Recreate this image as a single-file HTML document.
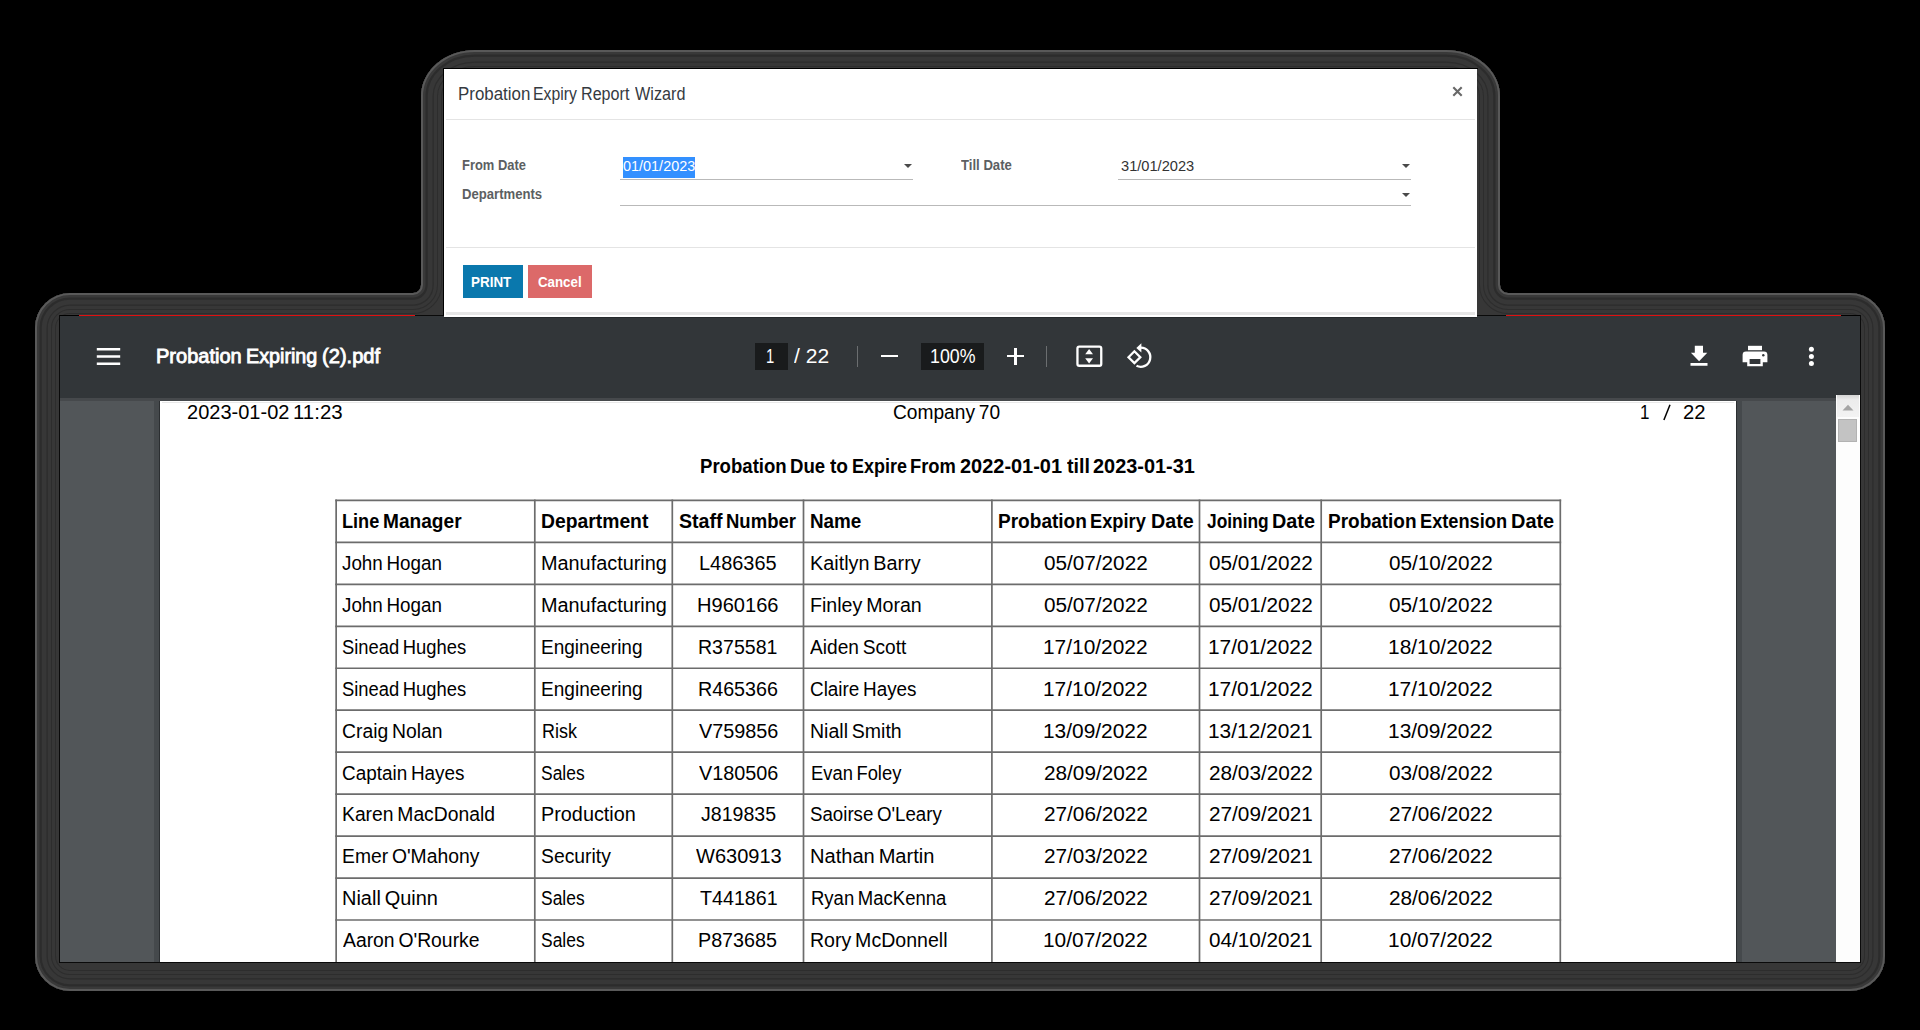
<!DOCTYPE html>
<html><head><meta charset="utf-8"><title>Probation Expiry Report</title>
<style>
*{box-sizing:border-box;margin:0;padding:0}
html,body{width:1920px;height:1030px;overflow:hidden;background:#000;font-family:"Liberation Sans",sans-serif;}
.abs{position:absolute}
.t{position:absolute;white-space:nowrap;transform-origin:0 50%;line-height:1}
/* shadow bands */
/* pdf viewer */
#viewer{left:60px;top:316px;width:1800px;height:646px;background:#525659;overflow:hidden}
#vout{left:59px;top:315px;width:1802px;height:648px;background:#0a0a0a}
#toolbar{left:0;top:0;width:1800px;height:82px;background:#323639;box-shadow:0 3px 0 0 #46494c}
#page{left:100px;top:84px;width:1576px;height:600px;background:#fff;box-shadow:0 0 0 1px #2b2e31,0 0 0 6px #45494c}
#pgline{left:102px;top:86px;width:1572px;height:1px;background:#e8e8e8}
#sb{left:1776px;top:79px;width:24px;height:567px;background:#fdfdfd;z-index:3}
#sbbtn{left:1px;top:0;width:22px;height:22px;background:linear-gradient(#d4d4d4,#ececec 5px,#f3f3f3)}
#sbthumb{left:2px;top:24px;width:19px;height:23px;background:#c3c3c3;border:1px solid #b2b2b2}
.box{background:#191b1c;position:absolute}
.sep{position:absolute;width:1px;background:#6b6e70}
.hl,.vl{position:absolute;background:#757575}
/* dialog */
#dlg{left:444px;top:69px;width:1033px;height:247.700px;background:#fff}
.line{position:absolute;height:1px}
.btn{position:absolute;top:196px;height:33px}
.caret{position:absolute;width:0;height:0;border-left:4.5px solid transparent;border-right:4.5px solid transparent;border-top:4.5px solid #4a4a4a}
</style></head><body>
<svg class="abs" style="left:0;top:0" width="1920" height="1030" viewBox="0 0 1920 1030">
<defs><clipPath id="bc"><path d="M70 293 H413 A8 8 0 0 0 421 285 V96 A54 46 0 0 1 475 50 H1446 A54 46 0 0 1 1500 96 V285 A8 8 0 0 0 1508 293 H1850 A35 35 0 0 1 1885 328 V956 A35 35 0 0 1 1850 991 H70 A35 35 0 0 1 35 956 V328 A35 35 0 0 1 70 293 Z"/></clipPath></defs>
<path d="M70 293 H413 A8 8 0 0 0 421 285 V96 A54 46 0 0 1 475 50 H1446 A54 46 0 0 1 1500 96 V285 A8 8 0 0 0 1508 293 H1850 A35 35 0 0 1 1885 328 V956 A35 35 0 0 1 1850 991 H70 A35 35 0 0 1 35 956 V328 A35 35 0 0 1 70 293 Z" fill="#373737"/>
<g clip-path="url(#bc)" fill="none" stroke-linejoin="round">
<path d="M70 293 H413 A8 8 0 0 0 421 285 V96 A54 46 0 0 1 475 50 H1446 A54 46 0 0 1 1500 96 V285 A8 8 0 0 0 1508 293 H1850 A35 35 0 0 1 1885 328 V956 A35 35 0 0 1 1850 991 H70 A35 35 0 0 1 35 956 V328 A35 35 0 0 1 70 293 Z" stroke="#2d2d2d" stroke-width="42"/>
<path d="M70 293 H413 A8 8 0 0 0 421 285 V96 A54 46 0 0 1 475 50 H1446 A54 46 0 0 1 1500 96 V285 A8 8 0 0 0 1508 293 H1850 A35 35 0 0 1 1885 328 V956 A35 35 0 0 1 1850 991 H70 A35 35 0 0 1 35 956 V328 A35 35 0 0 1 70 293 Z" stroke="#373737" stroke-width="40"/>
<path d="M70 293 H413 A8 8 0 0 0 421 285 V96 A54 46 0 0 1 475 50 H1446 A54 46 0 0 1 1500 96 V285 A8 8 0 0 0 1508 293 H1850 A35 35 0 0 1 1885 328 V956 A35 35 0 0 1 1850 991 H70 A35 35 0 0 1 35 956 V328 A35 35 0 0 1 70 293 Z" stroke="#2d2d2d" stroke-width="34"/>
<path d="M70 293 H413 A8 8 0 0 0 421 285 V96 A54 46 0 0 1 475 50 H1446 A54 46 0 0 1 1500 96 V285 A8 8 0 0 0 1508 293 H1850 A35 35 0 0 1 1885 328 V956 A35 35 0 0 1 1850 991 H70 A35 35 0 0 1 35 956 V328 A35 35 0 0 1 70 293 Z" stroke="#373737" stroke-width="32"/>
<path d="M70 293 H413 A8 8 0 0 0 421 285 V96 A54 46 0 0 1 475 50 H1446 A54 46 0 0 1 1500 96 V285 A8 8 0 0 0 1508 293 H1850 A35 35 0 0 1 1885 328 V956 A35 35 0 0 1 1850 991 H70 A35 35 0 0 1 35 956 V328 A35 35 0 0 1 70 293 Z" stroke="#2d2d2d" stroke-width="25.6"/>
<path d="M70 293 H413 A8 8 0 0 0 421 285 V96 A54 46 0 0 1 475 50 H1446 A54 46 0 0 1 1500 96 V285 A8 8 0 0 0 1508 293 H1850 A35 35 0 0 1 1885 328 V956 A35 35 0 0 1 1850 991 H70 A35 35 0 0 1 35 956 V328 A35 35 0 0 1 70 293 Z" stroke="#373737" stroke-width="23"/>
<path d="M70 293 H413 A8 8 0 0 0 421 285 V96 A54 46 0 0 1 475 50 H1446 A54 46 0 0 1 1500 96 V285 A8 8 0 0 0 1508 293 H1850 A35 35 0 0 1 1885 328 V956 A35 35 0 0 1 1850 991 H70 A35 35 0 0 1 35 956 V328 A35 35 0 0 1 70 293 Z" stroke="#2c2c2c" stroke-width="13.4"/>
<path d="M70 293 H413 A8 8 0 0 0 421 285 V96 A54 46 0 0 1 475 50 H1446 A54 46 0 0 1 1500 96 V285 A8 8 0 0 0 1508 293 H1850 A35 35 0 0 1 1885 328 V956 A35 35 0 0 1 1850 991 H70 A35 35 0 0 1 35 956 V328 A35 35 0 0 1 70 293 Z" stroke="#393939" stroke-width="9"/>
<path d="M70 293 H413 A8 8 0 0 0 421 285 V96 A54 46 0 0 1 475 50 H1446 A54 46 0 0 1 1500 96 V285 A8 8 0 0 0 1508 293 H1850 A35 35 0 0 1 1885 328 V956 A35 35 0 0 1 1850 991 H70 A35 35 0 0 1 35 956 V328 A35 35 0 0 1 70 293 Z" stroke="#595959" stroke-width="4"/>
</g></svg>

<div id="vout" class="abs"></div>
<div id="viewer" class="abs">
  <div id="page" class="abs"></div>
  <div id="pgline" class="abs"></div>
  <div id="sb" class="abs">
    <div id="sbbtn" class="abs"></div>
    <svg class="abs" style="left:5.5px;top:8.600px" width="12" height="7" viewBox="0 0 12 7"><path d="M0.5 6.5 L6 0.8 L11.5 6.5 Z" fill="#a5a5a5"/></svg>
    <div id="sbthumb" class="abs"></div>
  </div>
  <div id="toolbar" class="abs">
    <!-- hamburger -->
    <svg class="abs" style="left:36px;top:31px" width="25" height="19" viewBox="0 0 25 19"><path d="M0.8 1h23.4v2.6H0.8z M0.8 8.2h23.4v2.6H0.8z M0.8 15.4h23.4v2.6H0.8z" fill="#fff"/></svg>
    <div class="box" style="left:695px;top:27px;width:33px;height:27px"></div>
    <div class="sep" style="left:797px;top:30px;height:21px"></div>
    <div class="abs" style="left:821px;top:39px;width:17px;height:2.4px;background:#fff"></div>
    <div class="box" style="left:861px;top:27px;width:63px;height:27px"></div>
    <div class="abs" style="left:947px;top:39px;width:17px;height:2.4px;background:#fff"></div>
    <div class="abs" style="left:954.3px;top:31.7px;width:2.4px;height:17px;background:#fff"></div>
    <div class="sep" style="left:986px;top:30px;height:21px"></div>
    <!-- fit to page -->
    <svg class="abs" style="left:1015px;top:28px" width="29" height="25" viewBox="0 0 29 25"><rect x="2.45" y="2.65" width="23.800" height="19.100" rx="1.800" fill="none" stroke="#fff" stroke-width="2.300"/><path d="M14.1 4.900l3.900 5.400h-7.800z M14.100 19.500l3.900-5.200h-7.800z" fill="#fff"/></svg>
    <!-- rotate -->
    <svg class="abs" style="left:1065px;top:26px" width="29" height="28" viewBox="0 0 29 28"><path d="M15.800 5.600 A9.600 9.600 0 1 1 11.500 23.830" fill="none" stroke="#fff" stroke-width="2.300"/><path d="M16.400 1.200 L11.300 6 L16.400 10.600 Z" fill="#fff"/><path d="M3.500 15.200 L9.400 9.300 L15.300 15.200 L9.400 21.100 Z" fill="none" stroke="#323639" stroke-width="4.300"/><path d="M3.500 15.200 L9.400 9.300 L15.300 15.200 L9.400 21.100 Z" fill="none" stroke="#fff" stroke-width="2.300"/></svg>
    <!-- download -->
    <svg class="abs" style="left:1629px;top:29px" width="20" height="22" viewBox="0 0 20 22"><path d="M5.800 0.800h8.200v7h4.300L10.100 16.200 1.900 7.800H5.800z M1.500 18h17v2.700H1.500z" fill="#fff"/></svg>
    <!-- print -->
    <svg class="abs" style="left:1682px;top:29px" width="26" height="22" viewBox="0 0 26 22"><path d="M6 0.8h14v4.4H6z" fill="#fff"/><path d="M4 6.4h18a3.4 3.4 0 0 1 3.4 3.4v7.4h-4.6v4H5.2v-4H0.6V9.800a3.400 3.400 0 0 1 3.400 -3.400z M7.600 14h10.800v5H7.600z" fill="#fff" fill-rule="evenodd"/><circle cx="21.300" cy="10.200" r="1.200" fill="#323639"/></svg>
    <!-- more -->
    <svg class="abs" style="left:1747px;top:30px" width="9" height="22" viewBox="0 0 9 22"><circle cx="4.400" cy="3.300" r="2.500" fill="#fff"/><circle cx="4.400" cy="10.400" r="2.500" fill="#fff"/><circle cx="4.400" cy="17.400" r="2.500" fill="#fff"/></svg>
  </div>
</div>
<!-- red accent line above viewer -->
<div class="abs" style="left:60px;top:315px;width:19px;height:1px;background:#000"></div>
<div class="abs" style="left:1841px;top:315px;width:19px;height:1px;background:#000"></div>
<div class="abs" style="left:79px;top:314.700px;width:336px;height:1.300px;background:#e01010"></div>
<div class="abs" style="left:1506px;top:314.700px;width:335px;height:1.300px;background:#e01010"></div>

<!-- table grid (page coords) -->
<div id="grid">
<svg class="abs" style="left:0;top:0" width="1920" height="962" viewBox="0 0 1920 962"><g stroke="#6c6c6c" stroke-width="1.7" fill="none">
<path d="M335.29999999999995 500.40H1561.1499999999999"/>
<path d="M335.29999999999995 542.36H1561.1499999999999"/>
<path d="M335.29999999999995 584.32H1561.1499999999999"/>
<path d="M335.29999999999995 626.28H1561.1499999999999"/>
<path d="M335.29999999999995 668.24H1561.1499999999999"/>
<path d="M335.29999999999995 710.20H1561.1499999999999"/>
<path d="M335.29999999999995 752.16H1561.1499999999999"/>
<path d="M335.29999999999995 794.12H1561.1499999999999"/>
<path d="M335.29999999999995 836.08H1561.1499999999999"/>
<path d="M335.29999999999995 878.04H1561.1499999999999"/>
<path d="M335.29999999999995 920.00H1561.1499999999999"/>
<path d="M336.15 499.55V962"/>
<path d="M534.8 499.55V962"/>
<path d="M672.3 499.55V962"/>
<path d="M803.5 499.55V962"/>
<path d="M991.9 499.55V962"/>
<path d="M1199.5 499.55V962"/>
<path d="M1321.2 499.55V962"/>
<path d="M1560.3 499.55V962"/>
</g></svg>
<svg class="abs" style="left:1660px;top:402px" width="14" height="20" viewBox="0 0 14 20"><path d="M3.900 18 L10 2.800" stroke="#000" stroke-width="1.500" fill="none"/></svg>
</div>

<div id="dlg" class="abs">
  <div class="line" style="left:2px;top:50px;width:1029px;background:#e4e4e4"></div>
  <!-- close x -->
  <svg class="abs" style="left:1008px;top:17px" width="11" height="11" viewBox="0 0 11 11"><path d="M1.300 1.300l8.400 8.400M9.700 1.300l-8.400 8.400" stroke="#686868" stroke-width="2.100" fill="none"/></svg>
  <div class="abs" style="left:178.600px;top:88.300px;width:72.300px;height:20.400px;background:#3390ff"></div>
  <div class="line" style="left:176px;top:110px;width:293px;background:#b9b9b9"></div>
  <div class="caret" style="left:460px;top:95px"></div>
  <div class="line" style="left:674px;top:110px;width:293px;background:#b9b9b9"></div>
  <div class="caret" style="left:958px;top:95px"></div>
  <div class="line" style="left:176px;top:136px;width:791px;background:#b9b9b9"></div>
  <div class="caret" style="left:958px;top:124px"></div>
  <div class="line" style="left:2px;top:178px;width:1029px;background:#e4e4e4"></div>
  <div class="btn" style="left:18.500px;width:60px;background:#0a78ad"></div>
  <div class="btn" style="left:84px;width:64px;background:#dc6969"></div>
  <div class="abs" style="left:2px;top:243px;width:1029px;height:3px;background:#e6e6e6"></div>
</div>
<div class="abs" style="left:444px;top:317px;width:1033px;height:1px;background:#24282b"></div>
<div class="abs" style="left:443px;top:68px;width:1035px;height:1px;background:#000"></div>
<div class="abs" style="left:443px;top:68px;width:1px;height:248px;background:#000"></div>

<span class="t" style="left:187.49px;top:403.00px;font-size:19.5px;color:#000;transform:scaleX(1.0267);">2023-01-02</span>
<span class="t" style="left:293.16px;top:403.00px;font-size:19.5px;color:#000;transform:scaleX(1.0488);">11:23</span>
<span class="t" style="left:893.08px;top:403.00px;font-size:19.5px;color:#000;transform:scaleX(0.9824);word-spacing:-1.6px;">Company 70</span>
<span class="t" style="left:1639.55px;top:403.00px;font-size:19.5px;color:#000;transform:scaleX(0.8727);">1</span>
<span class="t" style="left:1683.49px;top:403.00px;font-size:19.5px;color:#000;transform:scaleX(1.0392);">22</span>
<span class="t" style="left:700.04px;top:457.00px;font-size:19.5px;font-weight:700;color:#000;transform:scaleX(0.9529);">Probation</span>
<span class="t" style="left:790.36px;top:457.00px;font-size:19.5px;font-weight:700;color:#000;transform:scaleX(0.9542);">Due</span>
<span class="t" style="left:829.66px;top:457.00px;font-size:19.5px;font-weight:700;color:#000;transform:scaleX(0.9799);">to</span>
<span class="t" style="left:851.51px;top:457.00px;font-size:19.5px;font-weight:700;color:#000;transform:scaleX(0.9203);">Expire</span>
<span class="t" style="left:910.45px;top:457.00px;font-size:19.5px;font-weight:700;color:#000;transform:scaleX(0.9410);">From</span>
<span class="t" style="left:959.96px;top:457.00px;font-size:19.5px;font-weight:700;color:#000;transform:scaleX(1.0231);">2022-01-01</span>
<span class="t" style="left:1066.96px;top:457.00px;font-size:19.5px;font-weight:700;color:#000;transform:scaleX(1.0112);">till</span>
<span class="t" style="left:1093.23px;top:457.00px;font-size:19.5px;font-weight:700;color:#000;transform:scaleX(1.0213);">2023-01-31</span>
<span class="t" style="left:341.72px;top:512.00px;font-size:19.5px;font-weight:700;color:#000;transform:scaleX(0.9294);">Line</span>
<span class="t" style="left:382.87px;top:512.00px;font-size:19.5px;font-weight:700;color:#000;transform:scaleX(0.9799);">Manager</span>
<span class="t" style="left:540.68px;top:512.00px;font-size:19.5px;font-weight:700;color:#000;transform:scaleX(0.9908);">Department</span>
<span class="t" style="left:678.69px;top:512.00px;font-size:19.5px;font-weight:700;color:#000;transform:scaleX(1.0044);">Staff</span>
<span class="t" style="left:726.40px;top:512.00px;font-size:19.5px;font-weight:700;color:#000;transform:scaleX(0.9493);">Number</span>
<span class="t" style="left:810.07px;top:512.00px;font-size:19.5px;font-weight:700;color:#000;transform:scaleX(0.9670);">Name</span>
<span class="t" style="left:997.72px;top:512.00px;font-size:19.5px;font-weight:700;color:#000;transform:scaleX(0.9766);">Probation</span>
<span class="t" style="left:1090.16px;top:512.00px;font-size:19.5px;font-weight:700;color:#000;transform:scaleX(0.9359);">Expiry</span>
<span class="t" style="left:1150.77px;top:512.00px;font-size:19.5px;font-weight:700;color:#000;transform:scaleX(1.0107);">Date</span>
<span class="t" style="left:1206.50px;top:512.00px;font-size:19.5px;font-weight:700;color:#000;transform:scaleX(0.8894);">Joining</span>
<span class="t" style="left:1272.29px;top:512.00px;font-size:19.5px;font-weight:700;color:#000;transform:scaleX(1.0161);">Date</span>
<span class="t" style="left:1327.93px;top:512.00px;font-size:19.5px;font-weight:700;color:#000;transform:scaleX(0.9732);">Probation</span>
<span class="t" style="left:1420.11px;top:512.00px;font-size:19.5px;font-weight:700;color:#000;transform:scaleX(0.9339);">Extension</span>
<span class="t" style="left:1511.45px;top:512.00px;font-size:19.5px;font-weight:700;color:#000;transform:scaleX(1.0214);">Date</span>
<span class="t" style="left:342.43px;top:554.00px;font-size:19.5px;color:#000;transform:scaleX(0.9647);word-spacing:-1.6px;">John Hogan</span>
<span class="t" style="left:541.02px;top:554.00px;font-size:19.5px;color:#000;transform:scaleX(1.0181);">Manufacturing</span>
<span class="t" style="left:699.05px;top:554.00px;font-size:19.5px;color:#000;transform:scaleX(1.0224);">L486365</span>
<span class="t" style="left:810.41px;top:554.00px;font-size:19.5px;color:#000;transform:scaleX(1.0161);word-spacing:-1.6px;">Kaitlyn Barry</span>
<span class="t" style="left:1043.81px;top:554.00px;font-size:19.5px;color:#000;transform:scaleX(1.0623);">05/07/2022</span>
<span class="t" style="left:1208.81px;top:554.00px;font-size:19.5px;color:#000;transform:scaleX(1.0623);">05/01/2022</span>
<span class="t" style="left:1389.29px;top:554.00px;font-size:19.5px;color:#000;transform:scaleX(1.0623);">05/10/2022</span>
<span class="t" style="left:342.37px;top:596.00px;font-size:19.5px;color:#000;transform:scaleX(0.9645);word-spacing:-1.6px;">John Hogan</span>
<span class="t" style="left:541.02px;top:596.00px;font-size:19.5px;color:#000;transform:scaleX(1.0181);">Manufacturing</span>
<span class="t" style="left:696.87px;top:596.00px;font-size:19.5px;color:#000;transform:scaleX(1.0291);">H960166</span>
<span class="t" style="left:810.45px;top:596.00px;font-size:19.5px;color:#000;transform:scaleX(1.0058);word-spacing:-1.6px;">Finley Moran</span>
<span class="t" style="left:1043.81px;top:596.00px;font-size:19.5px;color:#000;transform:scaleX(1.0623);">05/07/2022</span>
<span class="t" style="left:1208.81px;top:596.00px;font-size:19.5px;color:#000;transform:scaleX(1.0623);">05/01/2022</span>
<span class="t" style="left:1389.29px;top:596.00px;font-size:19.5px;color:#000;transform:scaleX(1.0623);">05/10/2022</span>
<span class="t" style="left:342.04px;top:638.00px;font-size:19.5px;color:#000;transform:scaleX(0.9427);word-spacing:-1.6px;">Sinead Hughes</span>
<span class="t" style="left:541.12px;top:638.00px;font-size:19.5px;color:#000;transform:scaleX(0.9754);">Engineering</span>
<span class="t" style="left:698.35px;top:638.00px;font-size:19.5px;color:#000;transform:scaleX(1.0030);">R375581</span>
<span class="t" style="left:810.22px;top:638.00px;font-size:19.5px;color:#000;transform:scaleX(0.9817);word-spacing:-1.6px;">Aiden Scott</span>
<span class="t" style="left:1043.24px;top:638.00px;font-size:19.5px;color:#000;transform:scaleX(1.0710);">17/10/2022</span>
<span class="t" style="left:1208.24px;top:638.00px;font-size:19.5px;color:#000;transform:scaleX(1.0710);">17/01/2022</span>
<span class="t" style="left:1388.39px;top:638.00px;font-size:19.5px;color:#000;transform:scaleX(1.0722);">18/10/2022</span>
<span class="t" style="left:342.04px;top:680.00px;font-size:19.5px;color:#000;transform:scaleX(0.9427);word-spacing:-1.6px;">Sinead Hughes</span>
<span class="t" style="left:541.02px;top:680.00px;font-size:19.5px;color:#000;transform:scaleX(0.9771);">Engineering</span>
<span class="t" style="left:697.96px;top:680.00px;font-size:19.5px;color:#000;transform:scaleX(1.0096);">R465366</span>
<span class="t" style="left:809.71px;top:680.00px;font-size:19.5px;color:#000;transform:scaleX(0.9682);word-spacing:-1.6px;">Claire Hayes</span>
<span class="t" style="left:1043.24px;top:680.00px;font-size:19.5px;color:#000;transform:scaleX(1.0710);">17/10/2022</span>
<span class="t" style="left:1208.24px;top:680.00px;font-size:19.5px;color:#000;transform:scaleX(1.0710);">17/01/2022</span>
<span class="t" style="left:1388.27px;top:680.00px;font-size:19.5px;color:#000;transform:scaleX(1.0714);">17/10/2022</span>
<span class="t" style="left:342.06px;top:722.00px;font-size:19.5px;color:#000;transform:scaleX(0.9916);word-spacing:-1.6px;">Craig Nolan</span>
<span class="t" style="left:541.71px;top:722.00px;font-size:19.5px;color:#000;transform:scaleX(0.9222);">Risk</span>
<span class="t" style="left:698.95px;top:722.00px;font-size:19.5px;color:#000;transform:scaleX(1.0164);">V759856</span>
<span class="t" style="left:810.47px;top:722.00px;font-size:19.5px;color:#000;transform:scaleX(1.0011);word-spacing:-1.6px;">Niall Smith</span>
<span class="t" style="left:1043.24px;top:722.00px;font-size:19.5px;color:#000;transform:scaleX(1.0710);">13/09/2022</span>
<span class="t" style="left:1208.24px;top:722.00px;font-size:19.5px;color:#000;transform:scaleX(1.0708);">13/12/2021</span>
<span class="t" style="left:1388.20px;top:722.00px;font-size:19.5px;color:#000;transform:scaleX(1.0731);">13/09/2022</span>
<span class="t" style="left:342.15px;top:764.00px;font-size:19.5px;color:#000;transform:scaleX(0.9697);word-spacing:-1.6px;">Captain Hayes</span>
<span class="t" style="left:541.39px;top:764.00px;font-size:19.5px;color:#000;transform:scaleX(0.8938);">Sales</span>
<span class="t" style="left:698.95px;top:764.00px;font-size:19.5px;color:#000;transform:scaleX(1.0164);">V180506</span>
<span class="t" style="left:810.67px;top:764.00px;font-size:19.5px;color:#000;transform:scaleX(0.9416);word-spacing:-1.6px;">Evan Foley</span>
<span class="t" style="left:1043.56px;top:764.00px;font-size:19.5px;color:#000;transform:scaleX(1.0643);">28/09/2022</span>
<span class="t" style="left:1208.56px;top:764.00px;font-size:19.5px;color:#000;transform:scaleX(1.0643);">28/03/2022</span>
<span class="t" style="left:1389.29px;top:764.00px;font-size:19.5px;color:#000;transform:scaleX(1.0623);">03/08/2022</span>
<span class="t" style="left:341.84px;top:805.00px;font-size:19.5px;color:#000;transform:scaleX(0.9900);word-spacing:-1.6px;">Karen MacDonald</span>
<span class="t" style="left:541.02px;top:805.00px;font-size:19.5px;color:#000;transform:scaleX(1.0169);">Production</span>
<span class="t" style="left:700.62px;top:805.00px;font-size:19.5px;color:#000;transform:scaleX(1.0034);">J819835</span>
<span class="t" style="left:810.30px;top:805.00px;font-size:19.5px;color:#000;transform:scaleX(0.9577);word-spacing:-1.6px;">Saoirse O&#x27;Leary</span>
<span class="t" style="left:1043.56px;top:805.00px;font-size:19.5px;color:#000;transform:scaleX(1.0643);">27/06/2022</span>
<span class="t" style="left:1208.89px;top:805.00px;font-size:19.5px;color:#000;transform:scaleX(1.0641);">27/09/2021</span>
<span class="t" style="left:1389.21px;top:805.00px;font-size:19.5px;color:#000;transform:scaleX(1.0633);">27/06/2022</span>
<span class="t" style="left:341.82px;top:847.00px;font-size:19.5px;color:#000;transform:scaleX(0.9900);word-spacing:-1.6px;">Emer O&#x27;Mahony</span>
<span class="t" style="left:541.28px;top:847.00px;font-size:19.5px;color:#000;transform:scaleX(0.9911);">Security</span>
<span class="t" style="left:695.84px;top:847.00px;font-size:19.5px;color:#000;transform:scaleX(1.0270);">W630913</span>
<span class="t" style="left:810.41px;top:847.00px;font-size:19.5px;color:#000;transform:scaleX(1.0289);word-spacing:-1.6px;">Nathan Martin</span>
<span class="t" style="left:1043.56px;top:847.00px;font-size:19.5px;color:#000;transform:scaleX(1.0643);">27/03/2022</span>
<span class="t" style="left:1209.29px;top:847.00px;font-size:19.5px;color:#000;transform:scaleX(1.0644);">27/09/2021</span>
<span class="t" style="left:1389.39px;top:847.00px;font-size:19.5px;color:#000;transform:scaleX(1.0639);">27/06/2022</span>
<span class="t" style="left:341.71px;top:889.00px;font-size:19.5px;color:#000;transform:scaleX(1.0234);word-spacing:-1.6px;">Niall Quinn</span>
<span class="t" style="left:541.39px;top:889.00px;font-size:19.5px;color:#000;transform:scaleX(0.8938);">Sales</span>
<span class="t" style="left:699.80px;top:889.00px;font-size:19.5px;color:#000;transform:scaleX(1.0087);">T441861</span>
<span class="t" style="left:810.65px;top:889.00px;font-size:19.5px;color:#000;transform:scaleX(0.9490);word-spacing:-1.6px;">Ryan MacKenna</span>
<span class="t" style="left:1043.56px;top:889.00px;font-size:19.5px;color:#000;transform:scaleX(1.0643);">27/06/2022</span>
<span class="t" style="left:1208.98px;top:889.00px;font-size:19.5px;color:#000;transform:scaleX(1.0640);">27/09/2021</span>
<span class="t" style="left:1389.48px;top:889.00px;font-size:19.5px;color:#000;transform:scaleX(1.0644);">28/06/2022</span>
<span class="t" style="left:342.56px;top:931.00px;font-size:19.5px;color:#000;transform:scaleX(0.9920);word-spacing:-1.6px;">Aaron O&#x27;Rourke</span>
<span class="t" style="left:541.39px;top:931.00px;font-size:19.5px;color:#000;transform:scaleX(0.8938);">Sales</span>
<span class="t" style="left:698.27px;top:931.00px;font-size:19.5px;color:#000;transform:scaleX(1.0114);">P873685</span>
<span class="t" style="left:810.37px;top:931.00px;font-size:19.5px;color:#000;transform:scaleX(1.0029);word-spacing:-1.6px;">Rory McDonnell</span>
<span class="t" style="left:1043.24px;top:931.00px;font-size:19.5px;color:#000;transform:scaleX(1.0710);">10/07/2022</span>
<span class="t" style="left:1209.20px;top:931.00px;font-size:19.5px;color:#000;transform:scaleX(1.0603);">04/10/2021</span>
<span class="t" style="left:1388.27px;top:931.00px;font-size:19.5px;color:#000;transform:scaleX(1.0731);">10/07/2022</span>
<span class="t" style="left:156.09px;top:347.00px;font-size:19.5px;color:#fff;transform:scaleX(1.0271);-webkit-text-stroke-width:0.8px;">Probation</span>
<span class="t" style="left:246.14px;top:347.00px;font-size:19.5px;color:#fff;transform:scaleX(1.0119);-webkit-text-stroke-width:0.8px;">Expiring</span>
<span class="t" style="left:321.87px;top:347.00px;font-size:19.5px;color:#fff;transform:scaleX(1.0313);-webkit-text-stroke-width:0.8px;">(2).pdf</span>
<span class="t" style="left:766.31px;top:347.00px;font-size:19.5px;color:#fff;transform:scaleX(0.7613);">1</span>
<span class="t" style="left:793.80px;top:347.00px;font-size:19.5px;color:#fff;transform:scaleX(1.0795);">/ 22</span>
<span class="t" style="left:929.59px;top:347.00px;font-size:19.5px;color:#fff;transform:scaleX(0.9107);">100%</span>
<span class="t" style="left:457.61px;top:86.00px;font-size:17.5px;color:#353a3f;transform:scaleX(0.9658);">Probation</span>
<span class="t" style="left:532.63px;top:86.00px;font-size:17.5px;color:#353a3f;transform:scaleX(0.9016);">Expiry</span>
<span class="t" style="left:581.38px;top:86.00px;font-size:17.5px;color:#353a3f;transform:scaleX(0.9213);">Report</span>
<span class="t" style="left:634.72px;top:86.00px;font-size:17.5px;color:#353a3f;transform:scaleX(0.9258);">Wizard</span>
<span class="t" style="left:462.47px;top:158.00px;font-size:14px;font-weight:700;color:#5c5f62;transform:scaleX(0.9231);">From Date</span>
<span class="t" style="left:462.35px;top:187.00px;font-size:14px;font-weight:700;color:#5c5f62;transform:scaleX(0.9362);">Departments</span>
<span class="t" style="left:961.38px;top:158.00px;font-size:14px;font-weight:700;color:#5c5f62;transform:scaleX(0.9381);">Till Date</span>
<span class="t" style="left:622.64px;top:159.00px;font-size:14.5px;color:#fff;transform:scaleX(0.9955);">01/01/2023</span>
<span class="t" style="left:1120.88px;top:159.00px;font-size:14.5px;color:#333;transform:scaleX(1.0090);">31/01/2023</span>
<span class="t" style="left:471.35px;top:275.00px;font-size:14px;font-weight:700;color:#fff;transform:scaleX(0.9603);">PRINT</span>
<span class="t" style="left:537.60px;top:275.00px;font-size:14px;font-weight:700;color:#fff;transform:scaleX(0.9493);">Cancel</span>
</body></html>
